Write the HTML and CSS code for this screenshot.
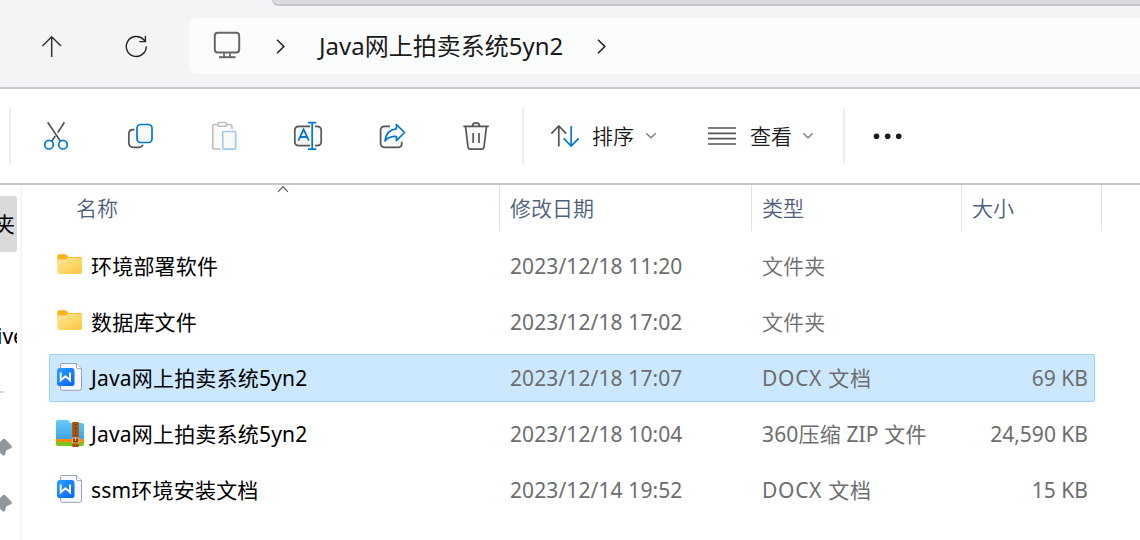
FILE: index.html
```html
<!DOCTYPE html>
<html lang="zh-CN">
<head>
<meta charset="utf-8">
<title>Java网上拍卖系统5yn2</title>
<link rel="stylesheet" href="styles.css">
</head>
<body>
<div class="topbar">
  <div class="tabstrip"></div>
  <div class="nav">
    <div class="btn"><svg width="28" height="28" viewBox="38 32 28 28"><path d="M51.7 57V37M42.5 46L51.7 36.8L61 46" stroke="#333" stroke-width="1.5"/></svg></div>
    <div class="btn"><svg width="28" height="28" viewBox="122 32 28 28"><path d="M146.3 46.5A10 10 0 1 1 143.5 39.5L145.2 41.2M145.4 36V41.6H139.3" stroke="#222" stroke-width="1.4"/></svg></div>
    <div class="address">
      <svg class="pc" width="28" height="30" viewBox="213 31 28 30"><rect x="214.8" y="32.8" width="24.4" height="19.8" rx="3" stroke="#666" stroke-width="2"/><path d="M224 53V57M230 53V57" stroke="#777" stroke-width="2"/><path d="M219 57.2H235.5" stroke="#666" stroke-width="2"/></svg>
      <svg class="crumb" width="10" height="16" viewBox="276 38 10 16"><path d="M277 39.8L283.8 46.5L277 53.2" stroke="#222" stroke-width="1.6"/></svg>
      <span class="path">Java网上拍卖系统5yn2</span>
      <svg class="crumb2" width="10" height="16" viewBox="276 38 10 16"><path d="M277 39.8L283.8 46.5L277 53.2" stroke="#222" stroke-width="1.6"/></svg>
    </div>
  </div>
</div>

<div class="toolbar">
  <div class="sep"></div>
  <div class="icons">
    <div class="btn"><svg width="36" height="36" viewBox="38 118 36 36"><path d="M47.7 122.2L60.3 141M64.4 122.2L57.8 132.6M55.3 136L51.8 141" stroke="#555" stroke-width="1.7"/><circle cx="49" cy="144.7" r="4.3" stroke="#0078d4" stroke-width="1.7"/><circle cx="63" cy="144.7" r="4.3" stroke="#0078d4" stroke-width="1.7"/></svg></div>
    <div class="btn"><svg width="36" height="36" viewBox="122 118 36 36"><path d="M134.5 129.6H133Q128.8 129.6 128.8 134V142.5Q128.8 147.3 133.5 147.3H139Q142 147.3 143 144.8" fill="#f8f8f8" stroke="#555" stroke-width="1.7"/><rect x="137" y="124.5" width="15" height="18" rx="3.4" fill="#f8f8f8" stroke="#0078d4" stroke-width="1.7"/></svg></div>
    <div class="btn"><svg width="36" height="36" viewBox="206 118 36 36"><path d="M218 124.5H214.5Q212.7 124.5 212.7 126.3V147.2Q212.7 149 214.5 149H220.5M226.5 124.5H230Q232 124.5 232 126.5V129" fill="#fafafa" stroke="#bebebe" stroke-width="1.6"/><rect x="217.8" y="122.5" width="9" height="3.7" rx="1.8" fill="#fff" stroke="#bebebe" stroke-width="1.6"/><rect x="222.7" y="131.5" width="13" height="17.6" rx="1" fill="#fafafa" stroke="#9ccbee" stroke-width="1.7"/></svg></div>
    <div class="btn"><svg width="36" height="36" viewBox="290 118 36 36"><path d="M310 126.4H299Q294.8 126.4 294.8 130.5V141.5Q294.8 145.6 299 145.6H310M315 126.4H317Q321.2 126.4 321.2 130.5V141.5Q321.2 145.6 317 145.6H315" fill="#f8f8f8" stroke="#555" stroke-width="1.7"/><path d="M298.4 140.7L303.6 129.4L308.8 140.7M300.3 137H306.9M308 122.7H316.3M308 149.2H316.3M312.2 123V149" stroke="#0078d4" stroke-width="1.8"/></svg></div>
    <div class="btn"><svg width="36" height="36" viewBox="374 118 36 36"><path d="M390 126.4H384.5Q380.6 126.4 380.6 130.3V143.3Q380.6 147.3 384.5 147.3H398Q401.8 147.3 401.8 143.5V141.8" fill="#f8f8f8" stroke="#555" stroke-width="1.7"/><path d="M396.4 124.6L404.6 132.5L396.4 140.6V136.5Q389.5 136 385 140.8Q386.3 129.8 396.4 128.8Z" fill="#fff" stroke="#0078d4" stroke-width="1.7" stroke-linejoin="round"/></svg></div>
    <div class="btn"><svg width="36" height="36" viewBox="458 118 36 36"><path d="M465.5 126.4L468 147Q468.3 149.2 470.5 149.2H481.5Q483.7 149.2 484 147L486.5 126.4" fill="#f8f8f8" stroke="#555" stroke-width="1.7"/><path d="M463.4 126.4H488.8M472.6 126Q472.6 122.8 476 122.8Q479.4 122.8 479.4 126M473.2 133V143M479 133V143" stroke="#555" stroke-width="1.7"/></svg></div>
  </div>
  <div class="sep"></div>
  <div class="menu sort">
    <svg width="30" height="26" viewBox="550 123 30 26"><path d="M558.8 146.5V126M551.3 133.6L558.8 126L566.3 133.6" stroke="#555" stroke-width="1.7"/><path d="M571.2 126V146M563.7 138.4L571.2 146L578.7 138.4" stroke="#0078d4" stroke-width="1.7"/></svg>
    <span>排序</span>
    <svg width="12" height="8" viewBox="0 0 12 8"><path d="M1.2 1.2L6 5.8L10.8 1.2" stroke="#777" stroke-width="1.2"/></svg>
  </div>
  <div class="menu view">
    <svg width="28" height="20" viewBox="708 126 28 20"><path d="M708 128H736M708 133.4H736M708 138.6H736M708 144H736" stroke="#555" stroke-width="1.6"/></svg>
    <span>查看</span>
    <svg width="12" height="8" viewBox="0 0 12 8"><path d="M1.2 1.2L6 5.8L10.8 1.2" stroke="#777" stroke-width="1.2"/></svg>
  </div>
  <div class="sep"></div>
  <svg class="more" width="30" height="8" viewBox="872 132 30 8"><circle cx="875.5" cy="136.3" r="2.8" fill="#1a1a1a"/><circle cx="886.7" cy="136.3" r="2.8" fill="#1a1a1a"/><circle cx="897.7" cy="136.3" r="2.8" fill="#1a1a1a"/></svg>
</div>

<div class="main">
  <div class="side">
    <div class="item active"><span>夹</span></div>
    <div class="item drive"><span>ive</span></div>
    <div class="line"></div>
    <div class="pin"><svg width="12" height="18" viewBox="0 438 12 18"><path d="M-3 445L3.3 438.8Q4.5 438.3 5.6 439.6L11.3 445.4Q12.6 447 11 448.2L6.2 450.6L5 454.8Q4 456.5 2.4 455L-3 450Z" fill="#8e989e"/></svg></div>
    <div class="pin"><svg width="12" height="18" viewBox="0 438 12 18"><path d="M-3 445L3.3 438.8Q4.5 438.3 5.6 439.6L11.3 445.4Q12.6 447 11 448.2L6.2 450.6L5 454.8Q4 456.5 2.4 455L-3 450Z" fill="#8e989e"/></svg></div>
  </div>
  <div class="list">
    <div class="head">
      <div class="cell name">名称<svg class="asc" width="12" height="8" viewBox="0 0 12 8"><path d="M1 6.8L6 1.6L11 6.8" stroke="#555" stroke-width="1.1"/></svg></div>
      <div class="cell">修改日期</div>
      <div class="cell">类型</div>
      <div class="cell">大小</div>
    </div>

    <div class="row">
      <div class="file"><svg width="30" height="30" viewBox="55 251 30 30"><use href="#folder"/></svg>环境部署软件</div>
      <div class="date">2023/12/18 11:20</div>
      <div class="type folder">文件夹</div>
      <div class="size"></div>
    </div>
    <div class="row">
      <div class="file"><svg width="30" height="30" viewBox="55 251 30 30"><use href="#folder"/></svg>数据库文件</div>
      <div class="date">2023/12/18 17:02</div>
      <div class="type folder">文件夹</div>
      <div class="size"></div>
    </div>
    <div class="row selected">
      <div class="file"><svg width="30" height="30" viewBox="55 363 30 30"><use href="#docx"/></svg>Java网上拍卖系统5yn2</div>
      <div class="date">2023/12/18 17:07</div>
      <div class="type docx">DOCX 文档</div>
      <div class="size">69 KB</div>
    </div>
    <div class="row">
      <div class="file"><svg width="30" height="30" viewBox="55 419 30 30"><use href="#zip"/></svg>Java网上拍卖系统5yn2</div>
      <div class="date">2023/12/18 10:04</div>
      <div class="type">360压缩 ZIP 文件</div>
      <div class="size">24,590 KB</div>
    </div>
    <div class="row">
      <div class="file"><svg width="30" height="30" viewBox="55 363 30 30"><use href="#docx"/></svg>ssm环境安装文档</div>
      <div class="date">2023/12/14 19:52</div>
      <div class="type docx">DOCX 文档</div>
      <div class="size">15 KB</div>
    </div>
  </div>
</div>

<!-- file type icons -->
<svg class="defs" width="0" height="0">
  <defs>
    <linearGradient id="gFolder" x1="0" y1="0" x2="1" y2="1"><stop offset="0" stop-color="#ffe79c"/><stop offset="1" stop-color="#fdc73c"/></linearGradient>
    <linearGradient id="gDoc" x1="0" y1="0" x2="1" y2="1"><stop offset="0" stop-color="#2aa0ff"/><stop offset="1" stop-color="#0a63ff"/></linearGradient>
    <linearGradient id="gZip" x1="0" y1="0" x2="0" y2="1"><stop offset="0" stop-color="#66caf7"/><stop offset="1" stop-color="#3fa4e8"/></linearGradient>
    <g id="folder">
      <path d="M57.3 256Q57.3 254.2 59 254.2H65Q66 254.2 66.8 255.2L68.5 257H80.5Q82 257 82 258.5V265H57.3Z" fill="#f7b416"/>
      <path d="M57.3 259.6H65.5L68.3 257.8H82V272.3Q82 274 80.3 274H59Q57.3 274 57.3 272.3Z" fill="url(#gFolder)"/>
    </g>
    <g id="docx">
      <path d="M62 363.5H76.5L81.5 368.5V388.3Q81.5 390.3 79.5 390.3H62.5Q60.5 390.3 60.5 388.3V365Q60.5 363.5 62 363.5Z" fill="#f5f9ff" stroke="#98a0b3" stroke-width="1"/>
      <path d="M76.5 363.5V367Q76.5 368.7 78.2 368.7H81.5" fill="#fff" stroke="#98a0b3" stroke-width="1"/>
      <rect x="57" y="368" width="17.5" height="18" rx="2.8" fill="url(#gDoc)"/>
      <path d="M60.7 372.5V380.3L65.6 376.2L70 380.3V372.5" fill="none" stroke="#fff" stroke-width="1.9"/>
    </g>
    <g id="zip">
      <path d="M56 438H84V444Q84 446 82 446H58Q56 446 56 444Z" fill="#79c51c"/>
      <path d="M56 434H84V442H58Q56 442 56 440Z" fill="#ff8a0c"/>
      <path d="M56 422Q56 420 58 420H66.5Q68 420 69 421.3L70.6 423H82Q84 423 84 425V439H58Q56 439 56 437Z" fill="url(#gZip)"/>
      <rect x="72.2" y="422" width="6.6" height="25" rx=".8" fill="#ae5108"/>
      <path d="M75.5 424V438" stroke="#61300b" stroke-width="1.4" stroke-dasharray="1.3 2.4"/>
      <rect x="72.5" y="438" width="6.2" height="5" fill="#8a3b05" stroke="#f2b671" stroke-width="1"/>
      <path d="M75.5 437V441" stroke="#ffc985" stroke-width="1"/>
    </g>
  </defs>
</svg>
</body>
</html>
```

FILE: styles.css
```css
* { box-sizing: border-box; }
body {
  margin: 0;
  width: 1140px;
  height: 540px;
  overflow: hidden;
  background: #fff;
  color: #000;
  font-family: "Noto Sans", "Noto Sans CJK SC", sans-serif;
  font-size: 21px;
  line-height: 30px;
  white-space: nowrap;
}
svg { display: block; flex: none; fill: none; }
.defs { position: absolute; }

/* navigation */
.topbar { height: 89px; background: #f3f4f6; border-bottom: 2px solid #c7c8ce; }
.tabstrip { height: 6px; margin-left: 272px; background: #d9dae0; border-bottom: 2px solid #c7c8ce; border-left: 1px solid #c7c8ce; border-bottom-left-radius: 6px; }
.nav { display: flex; padding: 12px 0 0 10px; }
.btn { width: 84px; height: 56px; display: flex; align-items: center; justify-content: center; }
.address { flex: 1; height: 56px; margin-left: 11px; padding-left: 24px; display: flex; align-items: center; background: #fbfdfd; border-radius: 8px 0 0 8px; }
.crumb { margin-left: 35px; }
.path { width: 245px; margin: 0 0 0 33px; font-size: 24px; color: #1a1a1a; }
.crumb2 { margin-left: 33px; }

/* command bar */
.toolbar { height: 96px; display: flex; align-items: center; padding-left: 9px; border-bottom: 2px solid #c7c6cd; }
.sep { width: 2px; height: 56px; background: #ededed; }
.icons { display: flex; padding: 0 4px 0 3px; }
.menu { display: flex; align-items: center; color: #1a1a1a; font-weight: 350; }
.menu span { width: 42px; }
.sort { margin-left: 26px; }
.sort span { margin: 0 11px 0 12px; }
.view { margin: 0 29px 0 51px; }
.view span { margin: 0 10px 0 14px; }
.more { margin-left: 28px; }

/* side pane, cut off at the left */
.main { display: flex; height: 355px; }
.side { width: 22px; border-right: 2px solid #f5f5f5; padding-top: 11px; overflow: hidden; }
.item { width: 17px; height: 56px; padding-top: 13px; overflow: hidden; display: flex; justify-content: flex-end; }
.active { background: #d9d9d9; border-radius: 0 3px 3px 0; padding-right: 2px; }
.drive { margin-top: 56px; justify-content: flex-start; }
.drive span { margin-left: -3px; }
.line { width: 4px; height: 2px; margin: 27px 0 46px; background: #d5d5d5; }
.pin { height: 56px; margin-top: -1px; margin-bottom: 1px; }

/* file list */
.list { flex: 1; }
.head { display: flex; height: 46px; margin-bottom: 11px; color: #4c607a; font-weight: 350; }
.cell { width: 210px; padding: 8px 0 0 10px; border-right: 1px solid #e2e2e2; }
.cell:nth-child(2) { width: 252px; }
.cell:nth-child(4) { width: 140px; }
.name { position: relative; width: 478px; padding-left: 54px; }
.asc { position: absolute; left: 255px; top: 0; }
.row { display: flex; align-items: center; width: 1046px; height: 48px; margin: 0 0 8px 27px; padding: 0 6px 0 5px; border: 1px solid transparent; border-radius: 2px; color: #6d6d6d; }
.selected { background: #cce8ff; border-color: #99d1ff; }
.file { display: flex; align-items: center; width: 455px; color: #000; letter-spacing: .2px; }
.file svg { margin-right: 6px; }
.date { width: 252px; letter-spacing: .1px; }
.type { flex: 1; letter-spacing: .15px; }
.folder { font-weight: 350; }
.docx { letter-spacing: .7px; }
.size { text-align: right; }
```
